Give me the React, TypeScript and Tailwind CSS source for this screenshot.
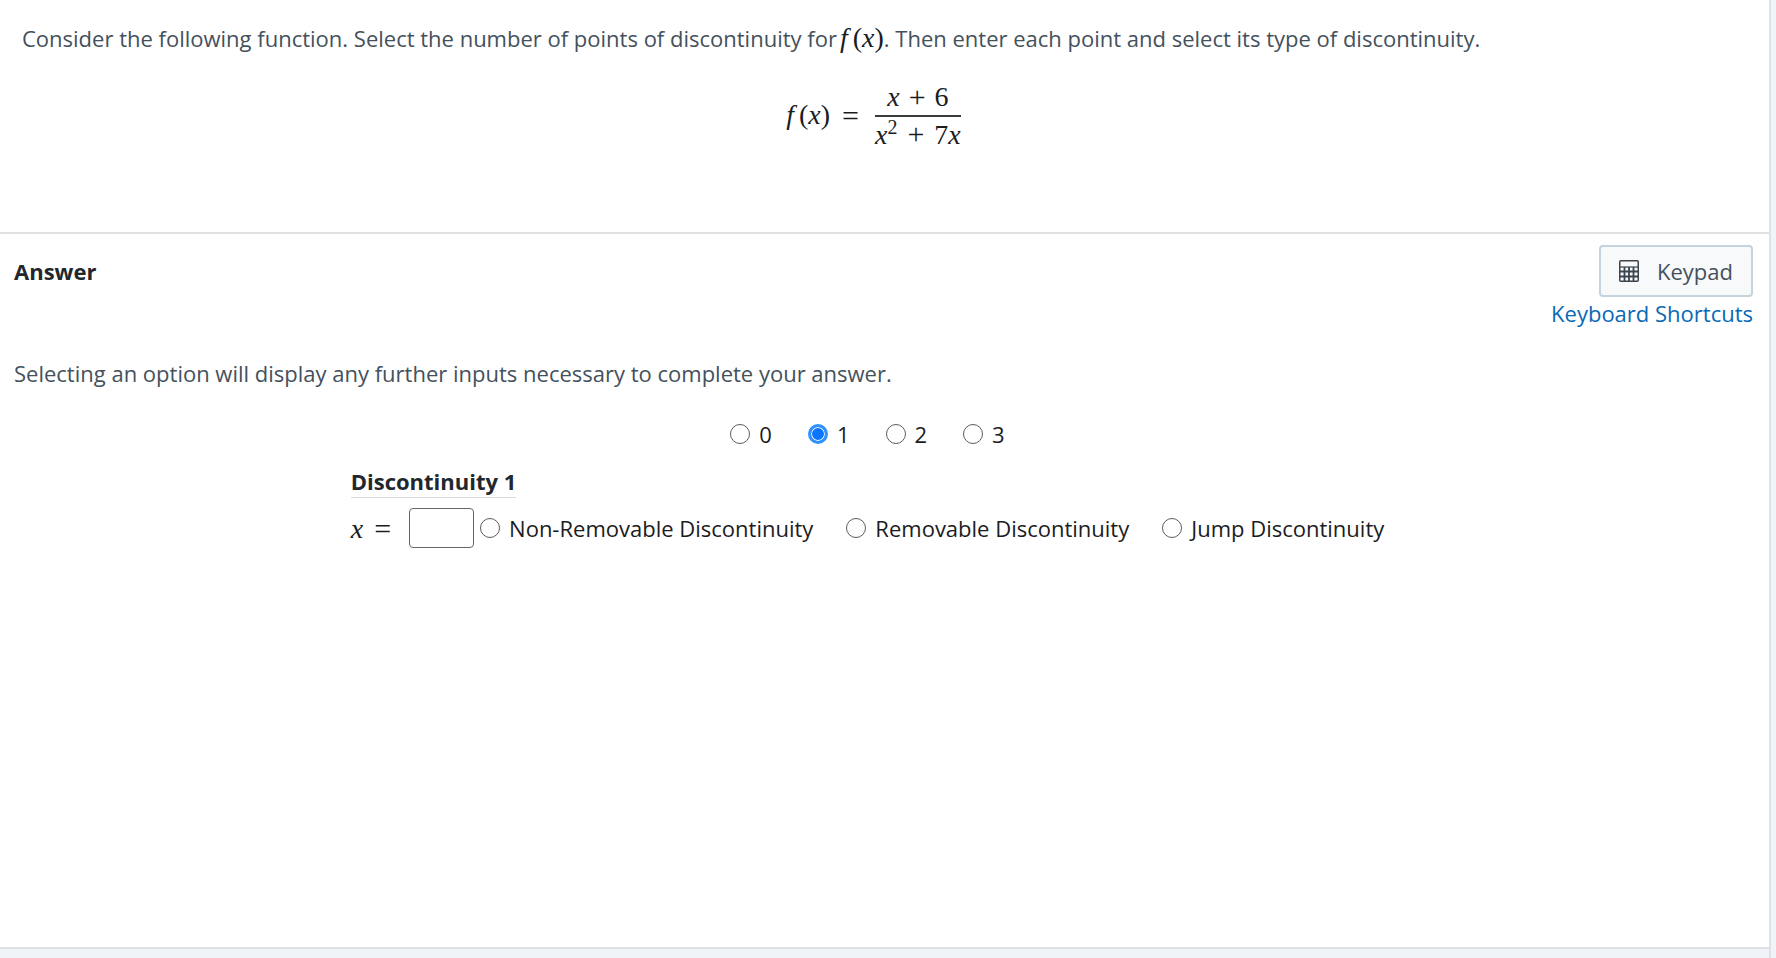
import React, { useState } from 'react';

const COUNTS = ['0', '1', '2', '3'];

const TYPES = [
  { value: 'non-removable', label: 'Non-Removable Discontinuity' },
  { value: 'removable', label: 'Removable Discontinuity' },
  { value: 'jump', label: 'Jump Discontinuity' }
];

interface RadioOptionProps {
  name: string;
  value: string;
  label: string;
  checked: boolean;
  onChange: (value: string) => void;
}

function RadioOption({ name, value, label, checked, onChange }: RadioOptionProps) {
  return (
    <label className="flex items-center gap-[9px] whitespace-nowrap text-[#1b1c1e]">
      <input
        type="radio"
        name={name}
        value={value}
        checked={checked}
        onChange={() => onChange(value)}
        className="h-5 w-5 shrink-0 appearance-none rounded-full border border-[#5c5c5c] bg-white checked:border-3 checked:border-[#2f92ff] checked:bg-[#0a75ff] checked:shadow-[inset_0_0_0_1px_#ffffff]"
      />
      {label}
    </label>
  );
}

function FunctionName() {
  return (
    <span className="font-['Liberation_Serif',serif] text-[28px] leading-none text-[#1b1c1e]">
      <i className="mr-[5px]">f</i>(<i>x</i>)
    </span>
  );
}

function Operator({ children }: { children: string }) {
  return <span className="text-[30px] leading-none">{children}</span>;
}

function KeypadIcon() {
  return (
    <svg className="h-[22px] w-5" viewBox="0 0 20 22" fill="none" stroke="#3b454e" aria-hidden="true">
      <rect x="0.75" y="0.75" width="18.5" height="20.5" rx="1" strokeWidth="1.5" />
      <path d="M1 7H19" strokeWidth="1.2" />
      <path d="M1 11.5H19M1 16.5H19M5.5 7V21M10 7V21M14.5 7V21" strokeWidth="1.8" />
    </svg>
  );
}

export default function App() {
  const [count, setCount] = useState('1');
  const [kind, setKind] = useState('');
  const [point, setPoint] = useState('');

  return (
    <div className="flex min-h-screen bg-[#f0f3f7] font-['Open_Sans',sans-serif] text-[22px] leading-8 text-[#44515c]">
      <main className="flex flex-1 flex-col border-r-2 border-[#dfe1e5]">
        {/* Question */}
        <section className="min-h-[234px] border-b-2 border-[#e1e2e4] bg-white pt-[22px] pr-11 pl-[22px]">
          <p>
            Consider the following function. Select the number of points of discontinuity for
            <span className="ml-[3px]">
              <FunctionName />
            </span>
            . Then enter each point and select its type of discontinuity.
          </p>

          <div className="mt-[25px] flex items-center justify-center font-['Liberation_Serif',serif] text-[28px] text-[#1b1c1e]">
            <FunctionName />
            <span className="mr-4 ml-3 flex pt-[2px]">
              <Operator>=</Operator>
            </span>
            <span className="flex flex-col items-center">
              <span className="flex h-9 items-center gap-[9px]">
                <i>x</i>
                <Operator>+</Operator>
                <span>6</span>
              </span>
              <span className="flex h-9 items-baseline gap-[10px] border-t-2 border-[#3a3b3d] pt-[2px]">
                <span>
                  <i>x</i>
                  <sup className="text-[20px]">2</sup>
                </span>
                <Operator>+</Operator>
                <span>
                  7<i>x</i>
                </span>
              </span>
            </span>
          </div>
        </section>

        {/* Answer */}
        <section className="flex-1 bg-white pt-[11px] pr-4 pl-[14px]">
          <div className="flex items-start justify-between">
            <h2 className="pt-[10px] font-bold text-[#22272d]">Answer</h2>
            <div className="flex flex-col items-end">
              <button
                type="button"
                className="flex h-[52px] items-center gap-[18px] rounded-sm border-2 border-[#c5d3dc] bg-[#f8f9fb] px-[18px]"
              >
                <KeypadIcon />
                Keypad
              </button>
              <a href="#shortcuts" className="text-[#0969b5]">
                Keyboard Shortcuts
              </a>
            </div>
          </div>

          <p className="mt-7">
            Selecting an option will display any further inputs necessary to complete your answer.
          </p>

          <div className="mt-[29px] flex justify-center gap-9 pr-8">
            {COUNTS.map((value) => (
              <RadioOption
                key={value}
                name="count"
                value={value}
                label={value}
                checked={count === value}
                onChange={setCount}
              />
            ))}
          </div>

          <div className="mt-[15px] flex justify-center pr-8">
            <div>
              <h3 className="inline-block border-b border-[#dcdcdc] font-bold text-[#22272d]">
                Discontinuity 1
              </h3>
              <div className="mt-[10px] flex items-center">
                <label
                  htmlFor="point"
                  className="mr-[18px] flex items-center gap-[11px] pt-[2px] font-['Liberation_Serif',serif] text-[28px] text-[#1b1c1e]"
                >
                  <i>x</i>
                  <Operator>=</Operator>
                </label>
                <input
                  id="point"
                  type="text"
                  value={point}
                  onChange={(e) => setPoint(e.target.value)}
                  className="mr-[6px] h-10 w-[65px] rounded-sm border border-[#666666] bg-white px-2"
                />
                <div className="flex gap-[33px]">
                  {TYPES.map((t) => (
                    <RadioOption
                      key={t.value}
                      name="kind"
                      value={t.value}
                      label={t.label}
                      checked={kind === t.value}
                      onChange={setKind}
                    />
                  ))}
                </div>
              </div>
            </div>
          </div>
        </section>

        {/* Bottom bar */}
        <footer className="h-[11px] border-t-2 border-[#dfe1e5]" />
      </main>
      <div className="w-[5px]" />
    </div>
  );
}
